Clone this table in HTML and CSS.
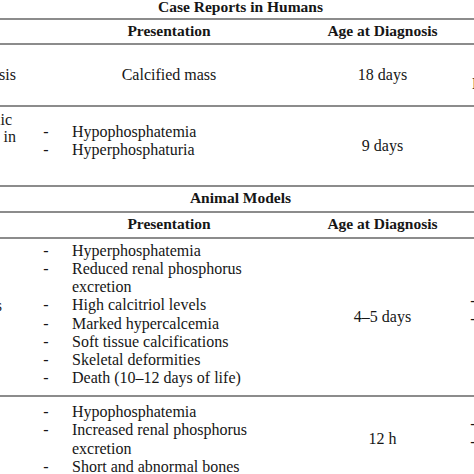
FILE: index.html
```html
<!DOCTYPE html>
<html lang="en">
<head>
<meta charset="utf-8">
<title>Case Reports and Animal Models</title>
<link rel="stylesheet" href="styles.css">
</head>
<body>
<div class="table">
  <div class="title t1">Case Reports in Humans</div>
  <div class="row hdr">
    <div class="cell"></div>
    <div class="cell center">Presentation</div>
    <div class="cell center">Age at Diagnosis</div>
    <div class="cell"></div>
  </div>
  <div class="row r1">
    <div class="cell c0 mid"><span>Prenatal diagnosis</span></div>
    <div class="cell center mid">Calcified mass</div>
    <div class="cell center mid">18 days</div>
    <div class="cell c3 r1c3"><span>Ectopic calcification</span></div>
  </div>
  <div class="row r2">
    <div class="cell c0 r2c0"><span class="shift">Hypophosphatemic</span><span>rickets in</span></div>
    <div class="cell c1 r2c1">
      <ul class="list">
        <li><span class="d">-</span><span>Hypophosphatemia</span></li>
        <li><span class="d">-</span><span>Hyperphosphaturia</span></li>
      </ul>
    </div>
    <div class="cell center mid">9 days</div>
    <div class="cell c3"></div>
  </div>
  <div class="title t2">Animal Models</div>
  <div class="row hdr">
    <div class="cell"></div>
    <div class="cell center">Presentation</div>
    <div class="cell center">Age at Diagnosis</div>
    <div class="cell"></div>
  </div>
  <div class="row r3">
    <div class="cell c0 r3c0"><span>Fgf23 null mice models</span></div>
    <div class="cell c1 r3c1">
      <ul class="list">
        <li><span class="d">-</span><span>Hyperphosphatemia</span></li>
        <li><span class="d">-</span><span>Reduced renal phosphorus excretion</span></li>
        <li><span class="d">-</span><span>High calcitriol levels</span></li>
        <li><span class="d">-</span><span>Marked hypercalcemia</span></li>
        <li><span class="d">-</span><span>Soft tissue calcifications</span></li>
        <li><span class="d">-</span><span>Skeletal deformities</span></li>
        <li><span class="d">-</span><span>Death (10–12 days of life)</span></li>
      </ul>
    </div>
    <div class="cell center mid">4–5 days</div>
    <div class="cell c3 r3c3">
      <ul class="list">
        <li><span class="d">-</span><span>Vitamin D</span></li>
        <li><span class="d">-</span><span>Low phosphate</span></li>
      </ul>
    </div>
  </div>
  <div class="row r4">
    <div class="cell c0"></div>
    <div class="cell c1 r4c1">
      <ul class="list">
        <li><span class="d">-</span><span>Hypophosphatemia</span></li>
        <li><span class="d">-</span><span>Increased renal phosphorus excretion</span></li>
        <li><span class="d">-</span><span>Short and abnormal bones</span></li>
      </ul>
    </div>
    <div class="cell center mid">12 h</div>
    <div class="cell c3 r4c3">
      <ul class="list">
        <li><span class="d">-</span><span>Phosphate</span></li>
        <li><span class="d">-</span><span>Calcitriol</span></li>
      </ul>
    </div>
  </div>
</div>
</body>
</html>
```
FILE: styles.css
```css
html, body {
  margin: 0;
  padding: 0;
  background: #ffffff;
}
body {
  width: 474px;
  height: 474px;
  overflow: hidden;
  font-family: "Liberation Serif", "Times New Roman", serif;
  font-size: 16px;
  color: #161616;
}
.table {
  width: 601px;
  margin-left: -60px;
}
.title {
  box-sizing: border-box;
  font-weight: bold;
  font-size: 15.5px;
  text-align: center;
  border-bottom: 2px solid #8c8c8c;
}
.t1 {
  height: 20px;
  line-height: 13px;
}
.t2 {
  height: 26px;
  line-height: 22px;
}
.row {
  box-sizing: border-box;
  display: grid;
  grid-template-columns: 86px 286px 141px 88px;
  border-bottom: 2px solid #8c8c8c;
}
.hdr {
  height: 26px;
  font-weight: bold;
  font-size: 15.5px;
  line-height: 22px;
}
.t1 + .hdr {
  height: 25px;
}
.r1 { height: 62px; line-height: 18px; }
.r2 { height: 80px; line-height: 18px; }
.r3 { height: 158px; line-height: 18.25px; }
.r4 { height: 86px; line-height: 18.25px; }

.center {
  text-align: center;
}
.mid {
  display: flex;
  align-items: center;
  justify-content: center;
}
.c0 {
  display: flex;
  flex-direction: column;
  align-items: flex-end;
  padding-right: 10px;
  white-space: nowrap;
}
.c0.mid {
  justify-content: center;
}
.r2c0 {
  padding-top: 3.6px;
  line-height: 17.5px;
}
.r2c0 .shift {
  margin-right: 4px;
}
.r3c0 {
  padding-top: 57.5px;
  padding-right: 24px;
}
.c1 {
  padding-right: 20px;
}
.r2c1 { padding-top: 16px; }
.r3c1 { padding-top: 2.7px; }
.r4c1 { padding-top: 6px; }

.c3 {
  white-space: nowrap;
  overflow: hidden;
}
.r1c3 {
  padding-top: 29.5px;
  padding-left: 19px;
}
.r3c3 { padding-top: 52.5px; }
.r4c3 { padding-top: 17.5px; }

.list {
  list-style: none;
  margin: 0;
  padding: 0 0 0 17.3px;
}
.list li {
  display: flex;
}
.list .d {
  flex: none;
  width: 28.7px;
}
```
